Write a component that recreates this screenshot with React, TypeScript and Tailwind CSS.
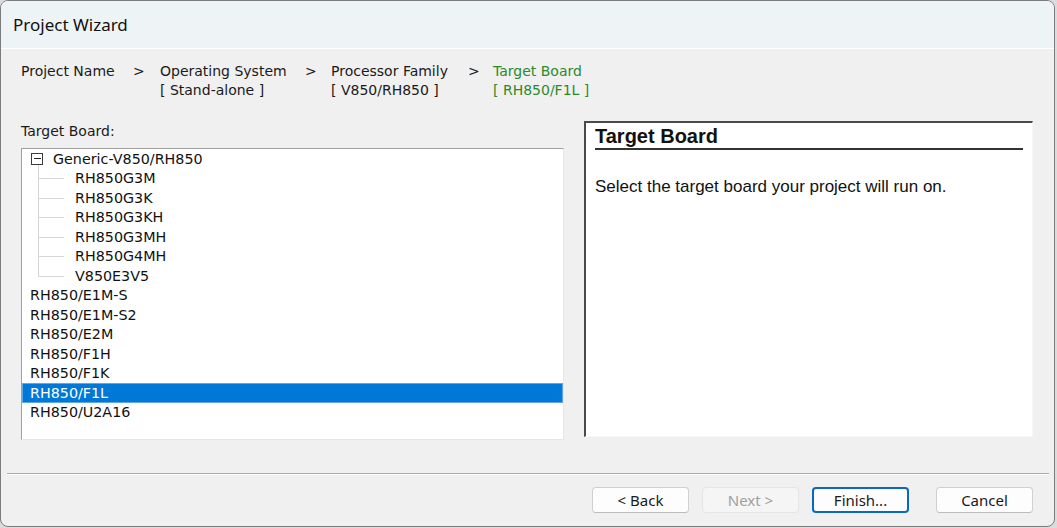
import React from "react";

const steps = [
  { title: "Project Name", sub: "", w: "w-[112px]", arrow: "w-[27px]" },
  { title: "Operating System", sub: "[ Stand-alone ]", w: "w-[145px]", arrow: "w-[26px]" },
  { title: "Processor Family", sub: "[ V850/RH850 ]", w: "w-[137px]", arrow: "w-[25px]" },
];

const children = ["RH850G3M", "RH850G3K", "RH850G3KH", "RH850G3MH", "RH850G4MH", "V850E3V5"];
const boards = ["RH850/E1M-S", "RH850/E1M-S2", "RH850/E2M", "RH850/F1H", "RH850/F1K", "RH850/F1L", "RH850/U2A16"];

const tahoma = "font-['DejaVu_Sans',sans-serif]";
const segoe = "font-['Noto_Sans',sans-serif]";

const Breadcrumb = () => (
  <div className={`flex pl-5 pt-[13px] text-[14px] leading-[19px] text-[#1a1a1a] ${tahoma}`}>
    {steps.map((s) => (
      <React.Fragment key={s.title}>
        <div className={`${s.w} shrink-0`}>
          <div>{s.title}</div>
          <div>{s.sub}</div>
        </div>
        <div className={`${s.arrow} shrink-0`}>&gt;</div>
      </React.Fragment>
    ))}
    <div className="text-[#2b8a2b]">
      <div>Target Board</div>
      <div>[ RH850/F1L ]</div>
    </div>
  </div>
);

const BoardTree = () => (
  <div className={`h-[292px] w-[543px] border border-t-[#a0a0a0] border-l-[#a0a0a0] border-r-[#e6e6e6] border-b-[#e6e6e6] bg-white text-[14.3px] text-[#111] ${tahoma}`}>
    <div className="relative flex h-[19.5px] items-center">
      <div className="ml-[9px] flex h-[12px] w-[12px] items-center justify-center border border-[#3a3a3a] bg-white">
        <div className="h-px w-[7px] bg-[#222]" />
      </div>
      <span className="absolute left-[15.5px] top-[15.5px] h-[4px] w-px bg-[#d6d6d6]" />
      <span className="ml-[10px] leading-none">Generic-V850/RH850</span>
    </div>
    {children.map((c, i) => (
      <div key={c} className="relative flex h-[19.5px] items-center">
        <span className={`absolute left-[16px] top-0 w-px bg-[#d6d6d6] ${i === children.length - 1 ? "h-1/2" : "h-full"}`} />
        <span className="absolute left-[16px] top-1/2 h-px w-[26px] bg-[#d6d6d6]" />
        <span className="pl-[53px] leading-none">{c}</span>
      </div>
    ))}
    {boards.map((b) => {
      const sel = b === "RH850/F1L";
      return (
        <div
          key={b}
          className={`flex h-[19.5px] items-center pl-[8px] ${sel ? "bg-[#0078d7] text-white outline outline-1 -outline-offset-1 outline-[#5ea6e6]" : ""}`}
        >
          <span className="leading-none">{b}</span>
        </div>
      );
    })}
  </div>
);

const HelpPanel = () => (
  <div className="h-[316px] w-[449px] border-t-2 border-l-2 border-r border-b border-t-[#4a4a4a] border-l-[#4a4a4a] border-r-[#f7f7f7] border-b-[#f7f7f7] bg-white pl-[9px] pr-[9px] font-['Liberation_Sans',Arial,sans-serif] text-[#111]">
    <div className="border-b-2 border-[#333] pt-[2px] text-[20px] font-bold leading-[23px]">Target Board</div>
    <p className="mt-[27px] text-[17px] leading-[20px]">Select the target board your project will run on.</p>
  </div>
);

const WizButton = ({ label, disabled = false, primary = false }: { label: string; disabled?: boolean; primary?: boolean }) => (
  <button
    type="button"
    disabled={disabled}
    className={`flex h-[26px] w-[97px] items-center justify-center rounded-[4px] text-[15px] leading-none ${segoe} ${
      disabled
        ? "border border-[#e5e5e5] bg-[#f5f5f5] text-[#a0a0a0]"
        : primary
        ? "border-2 border-[#0a67c2] bg-[#fdfdfd] text-[#1a1a1a]"
        : "border border-[#d0d0d0] border-b-[#bcbcbc] bg-[#fdfdfd] text-[#1a1a1a]"
    }`}
  >
    {label}
  </button>
);

export default function App() {
  return (
    <div className="h-[528px] w-[1057px] bg-[#dcdcdc]">
      <div className="flex h-[527px] w-[1055px] flex-col overflow-hidden rounded-[8px] border border-[#7c7c7c] bg-[#f0f0f0]">
        <div className={`flex h-[47px] shrink-0 items-center bg-[#eef3f6] pl-[12px] text-[17px] text-[#111] ${segoe}`}>
          Project Wizard
        </div>
        <div className="flex flex-1 flex-col border-t border-white">
          <Breadcrumb />
          <div className="mt-[21px] flex gap-[20px] pl-5">
            <div className="flex flex-col">
              <div className={`pt-[1px] text-[14px] leading-[19px] text-[#1a1a1a] ${tahoma}`}>Target Board:</div>
              <div className="mt-[7px]">
                <BoardTree />
              </div>
            </div>
            <HelpPanel />
          </div>
          <div className="ml-[6px] mr-[5px] mt-[33px] h-[2px] border-t border-b border-t-[#a9a9a9] border-b-white" />
          <div className="mr-[21px] mt-[12px] flex justify-end">
            <div className="flex gap-[13px]">
              <WizButton label="< Back" />
              <WizButton label="Next >" disabled />
              <WizButton label="Finish..." primary />
            </div>
            <div className="ml-[27px]">
              <WizButton label="Cancel" />
            </div>
          </div>
        </div>
      </div>
    </div>
  );
}
